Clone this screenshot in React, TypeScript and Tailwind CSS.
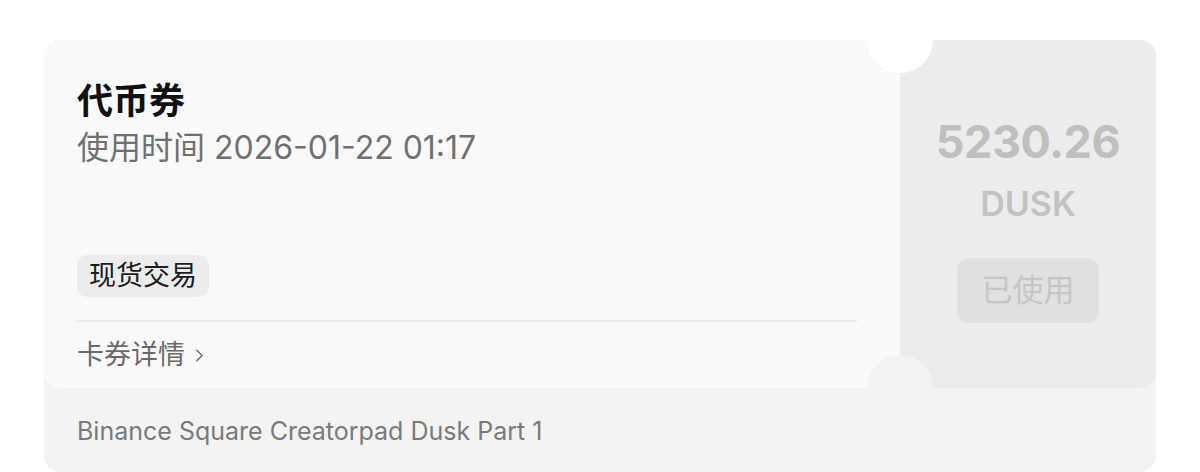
import React from "react";
import { ChevronRight } from "lucide-react";

const font = "font-['Inter','Noto_Sans_CJK_SC',sans-serif]";

const App: React.FC = () => {
  return (
    <div className={`min-h-[472px] w-full bg-white pt-10 px-[44px] ${font}`}>
      {/* Coupon card */}
      <div className="relative h-[432px] rounded-2xl bg-[#f3f3f3]">
        <div className="flex h-[348px] overflow-hidden rounded-2xl">
          {/* left side */}
          <div className="flex w-[856px] flex-col bg-[#f9f9f9] pl-[33px] pr-[43px] pt-[37px]">
            <h1 className="text-[36px] font-bold leading-[48px] text-[#111]">代币券</h1>
            <p className="mt-[2px] text-[32px] leading-[42px] text-[#707070]">使用时间 2026-01-22 01:17</p>
            <div className="mt-[86px] flex">
              <span className="rounded-[10px] bg-[#ececec] px-3 text-[27px] leading-[42px] text-[#1c1c1c]">现货交易</span>
            </div>
            <div className="mt-[23px] h-[2px] bg-[#ebebeb]" />
            <div className="mt-[15px] flex items-center text-[27px] leading-[36px] text-[#6a6a6a]">
              卡券详情
              <ChevronRight className="ml-[4px] h-[21px] w-[21px]" strokeWidth={1.6} />
            </div>
          </div>
          {/* right side */}
          <div className="flex w-[256px] flex-col items-center bg-[#ececec] pt-[70px]">
            <div className="text-[45px] font-bold leading-[64px] tracking-[-0.5px] text-[#bfbfbf]">5230.26</div>
            <div className="mt-[10px] text-[34px] font-semibold leading-[40px] text-[#c2c2c2]">DUSK</div>
            <div className="mt-[34px] flex h-[65px] w-[142px] items-center justify-center rounded-xl bg-[#e0e0e0] text-[31px] text-[#c6c6c6]">
              已使用
            </div>
          </div>
        </div>

        {/* notches */}
        <div className="absolute left-[823px] top-[-33px] h-[66px] w-[66px] rounded-full bg-white" />
        <div className="absolute left-[823px] top-[315px] h-[66px] w-[66px] rounded-full bg-[#f3f3f3] [clip-path:inset(0_0_50%_0)]" />

        <div className="flex h-[88px] items-center pl-[33px] text-[25px] text-[#7a7a7a]">
          Binance Square Creatorpad Dusk Part 1
        </div>
      </div>
    </div>
  );
};

export default App;
